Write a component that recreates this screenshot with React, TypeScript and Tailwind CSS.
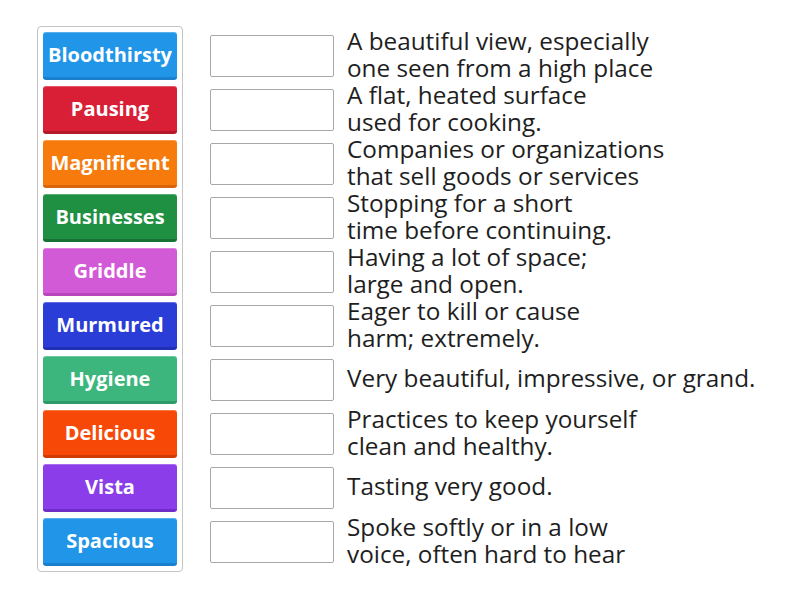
import React from 'react';

const words = [
  { label: 'Bloodthirsty', bg: 'bg-[#2196e8]', edge: 'border-[#1a7fcc]' },
  { label: 'Pausing', bg: 'bg-[#d91f36]', edge: 'border-[#b5182b]' },
  { label: 'Magnificent', bg: 'bg-[#f77b0c]', edge: 'border-[#d9650a]' },
  { label: 'Businesses', bg: 'bg-[#1f8f42]', edge: 'border-[#177335]' },
  { label: 'Griddle', bg: 'bg-[#d35ad6]', edge: 'border-[#b945bc]' },
  { label: 'Murmured', bg: 'bg-[#2a3dd6]', edge: 'border-[#2030b5]' },
  { label: 'Hygiene', bg: 'bg-[#3db67e]', edge: 'border-[#2f9a68]' },
  { label: 'Delicious', bg: 'bg-[#f84808]', edge: 'border-[#d23a05]' },
  { label: 'Vista', bg: 'bg-[#8a3de8]', edge: 'border-[#702cc8]' },
  { label: 'Spacious', bg: 'bg-[#2196e8]', edge: 'border-[#1a7fcc]' },
];

const definitions: string[][] = [
  ['A beautiful view, especially', 'one seen from a high place'],
  ['A flat, heated surface', 'used for cooking.'],
  ['Companies or organizations', 'that sell goods or services'],
  ['Stopping for a short', 'time before continuing.'],
  ['Having a lot of space;', 'large and open.'],
  ['Eager to kill or cause', 'harm; extremely.'],
  ['Very beautiful, impressive, or grand.'],
  ['Practices to keep yourself', 'clean and healthy.'],
  ['Tasting very good.'],
  ['Spoke softly or in a low', 'voice, often hard to hear'],
];

export default function App() {
  return (
    <div
      className="w-[800px] h-[600px] bg-white flex items-start pt-[26px] pl-[37px]"
      style={{ fontFamily: '"Open Sans", "Liberation Sans", sans-serif' }}
    >
      {/* word tiles */}
      <div className="w-[146px] border border-[#c4c4c4] rounded-[4px] p-[5px] flex flex-col gap-[6px]">
        {words.map((w) => (
          <div
            key={w.label}
            className={`h-[48px] rounded-[3px] border-b-[3px] ${w.bg} ${w.edge} flex items-center justify-center text-white font-bold text-[20px] leading-none shadow-[inset_0_1px_0_rgba(255,255,255,0.25)]`}
          >
            <span className="pt-[1px]">{w.label}</span>
          </div>
        ))}
      </div>

      {/* targets + definitions */}
      <div className="ml-[27px] pt-[3px] flex flex-col">
        {definitions.map((lines, i) => (
          <div key={i} className="h-[54px] flex items-center">
            <div className="w-[124px] h-[42px] border border-[#a8a8a8] rounded-[2px] bg-white shrink-0" />
            <div className="ml-[13px] -mt-[5px] text-[24.3px] leading-[27px] text-[#1e1e1e]">
              {lines.map((l) => (
                <div key={l} className="whitespace-nowrap">{l}</div>
              ))}
            </div>
          </div>
        ))}
      </div>
    </div>
  );
}
